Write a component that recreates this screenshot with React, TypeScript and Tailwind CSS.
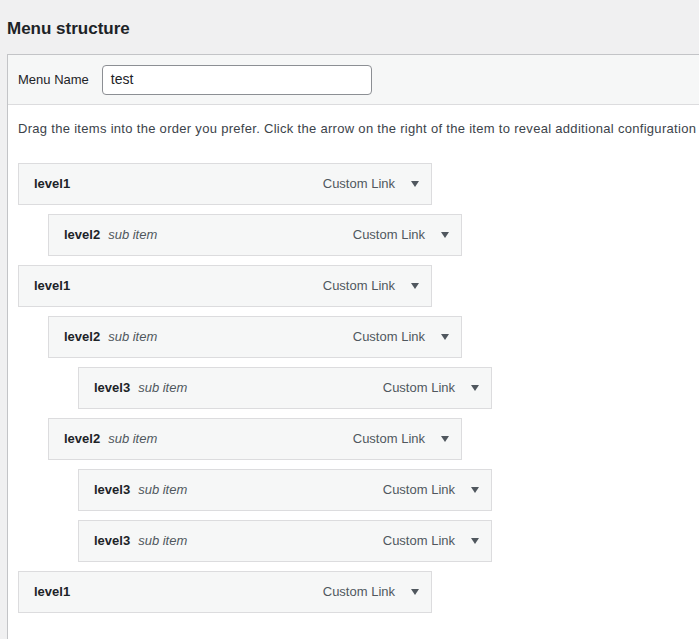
import React from 'react';

type Item = { title: string; depth: number; sub?: boolean };

const items: Item[] = [
  { title: 'level1', depth: 0 },
  { title: 'level2', depth: 1, sub: true },
  { title: 'level1', depth: 0 },
  { title: 'level2', depth: 1, sub: true },
  { title: 'level3', depth: 2, sub: true },
  { title: 'level2', depth: 1, sub: true },
  { title: 'level3', depth: 2, sub: true },
  { title: 'level3', depth: 2, sub: true },
  { title: 'level1', depth: 0 },
];

const indent = ['ml-0', 'ml-[30px]', 'ml-[60px]'];

const MenuItem: React.FC<{ item: Item }> = ({ item }) => (
  <div
    className={`${indent[item.depth]} w-[414px] h-[42px] flex items-center bg-[#f6f7f7] border border-[#dcdcde] pl-[15px] pr-[12px]`}
  >
    <span className="font-semibold text-[#1d2327]">{item.title}</span>
    {item.sub && <span className="italic text-[#50575e] ml-[8px]">sub item</span>}
    <span className="ml-auto text-[#50575e]">Custom Link</span>
    <span className="ml-[15px] w-[9px] flex justify-center">
      <svg width="8" height="6" viewBox="0 0 8 6">
        <path d="M0 0h8L4 6z" fill="#50575e" />
      </svg>
    </span>
  </div>
);

export default function App() {
  return (
    <div
      className="w-[699px] h-[639px] overflow-hidden bg-[#f0f0f1] text-[13px] text-[#1d2327]"
      style={{ fontFamily: '"Liberation Sans", Arial, sans-serif' }}
    >
      <h2 className="px-[7px] pt-[17px] pb-[13px] text-[17px] font-semibold leading-[24px]">Menu structure</h2>
      <div className="ml-[7px] w-[760px] border border-[#c3c4c7] bg-white min-h-[600px]">
        <div className="h-[50px] flex items-center gap-[13px] px-[10px] bg-[#f6f7f7] border-b border-[#dcdcde]">
          <label>Menu Name</label>
          <div className="w-[270px] h-[30px] flex items-center px-[8px] bg-white border border-[#8c8f94] rounded-[4px] text-[14px]">
            test
          </div>
        </div>
        <div className="px-[10px] pt-[15px]">
          <p className="whitespace-nowrap leading-[18px] text-[#3c434a] tracking-[0.3px]">
            Drag the items into the order you prefer. Click the arrow on the right of the item to reveal additional configuration options.
          </p>
          <div className="mt-[25px] flex flex-col gap-[9px]">
            {items.map((it, i) => (
              <MenuItem key={i} item={it} />
            ))}
          </div>
        </div>
      </div>
    </div>
  );
}
